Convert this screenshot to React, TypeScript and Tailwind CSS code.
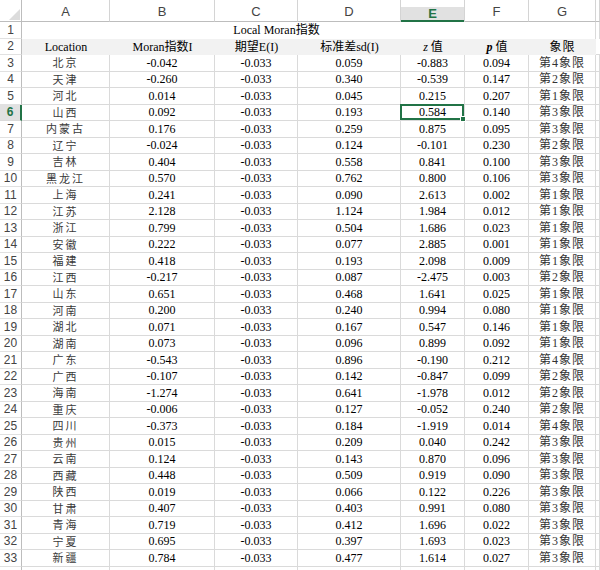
import React from "react";

const rows: [string, string, string, string, string, string, string][] = [
  ["北京", "-0.042", "-0.033", "0.059", "-0.883", "0.094", "第4象限"],
  ["天津", "-0.260", "-0.033", "0.340", "-0.539", "0.147", "第2象限"],
  ["河北", "0.014", "-0.033", "0.045", "0.215", "0.207", "第1象限"],
  ["山西", "0.092", "-0.033", "0.193", "0.584", "0.140", "第3象限"],
  ["内蒙古", "0.176", "-0.033", "0.259", "0.875", "0.095", "第3象限"],
  ["辽宁", "-0.024", "-0.033", "0.124", "-0.101", "0.230", "第2象限"],
  ["吉林", "0.404", "-0.033", "0.558", "0.841", "0.100", "第3象限"],
  ["黑龙江", "0.570", "-0.033", "0.762", "0.800", "0.106", "第3象限"],
  ["上海", "0.241", "-0.033", "0.090", "2.613", "0.002", "第1象限"],
  ["江苏", "2.128", "-0.033", "1.124", "1.984", "0.012", "第1象限"],
  ["浙江", "0.799", "-0.033", "0.504", "1.686", "0.023", "第1象限"],
  ["安徽", "0.222", "-0.033", "0.077", "2.885", "0.001", "第1象限"],
  ["福建", "0.418", "-0.033", "0.193", "2.098", "0.009", "第1象限"],
  ["江西", "-0.217", "-0.033", "0.087", "-2.475", "0.003", "第2象限"],
  ["山东", "0.651", "-0.033", "0.468", "1.641", "0.025", "第1象限"],
  ["河南", "0.200", "-0.033", "0.240", "0.994", "0.080", "第1象限"],
  ["湖北", "0.071", "-0.033", "0.167", "0.547", "0.146", "第1象限"],
  ["湖南", "0.073", "-0.033", "0.096", "0.899", "0.092", "第1象限"],
  ["广东", "-0.543", "-0.033", "0.896", "-0.190", "0.212", "第4象限"],
  ["广西", "-0.107", "-0.033", "0.142", "-0.847", "0.099", "第2象限"],
  ["海南", "-1.274", "-0.033", "0.641", "-1.978", "0.012", "第2象限"],
  ["重庆", "-0.006", "-0.033", "0.127", "-0.052", "0.240", "第2象限"],
  ["四川", "-0.373", "-0.033", "0.184", "-1.919", "0.014", "第4象限"],
  ["贵州", "0.015", "-0.033", "0.209", "0.040", "0.242", "第3象限"],
  ["云南", "0.124", "-0.033", "0.143", "0.870", "0.096", "第3象限"],
  ["西藏", "0.448", "-0.033", "0.509", "0.919", "0.090", "第3象限"],
  ["陕西", "0.019", "-0.033", "0.066", "0.122", "0.226", "第3象限"],
  ["甘肃", "0.407", "-0.033", "0.403", "0.991", "0.080", "第3象限"],
  ["青海", "0.719", "-0.033", "0.412", "1.696", "0.022", "第3象限"],
  ["宁夏", "0.695", "-0.033", "0.397", "1.693", "0.023", "第3象限"],
  ["新疆", "0.784", "-0.033", "0.477", "1.614", "0.027", "第3象限"],
];

const GRID =
  "grid grid-cols-[22px_88px_105px_83px_103px_64px_64px_67px_1fr]";
const CELL =
  "flex items-center justify-center border-r border-b border-[#dadada] whitespace-nowrap overflow-hidden";
const ROWH = "h-[16.5px]";
const HDR_FONT = "font-['Liberation_Sans',sans-serif] text-[12px] text-[#444444]";

function RowHead({ n, selected }: { n?: number; selected?: boolean }) {
  return selected ? (
    <div className="flex items-center justify-center bg-[#e1e1e1] border-b border-[#dadada] border-r-2 border-r-[#217346] font-['Liberation_Sans',sans-serif] text-[12px] font-bold text-[#217346]">
      {n}
    </div>
  ) : (
    <div
      className={`flex items-center justify-center bg-white border-b border-[#e1e1e1] border-r border-r-[#bdbdbd] ${HDR_FONT}`}
    >
      {n}
    </div>
  );
}

export default function App() {
  const cols = ["A", "B", "C", "D", "E", "F", "G", ""];
  return (
    <div className="w-[600px] h-[570px] overflow-hidden bg-white font-['Liberation_Serif','Noto_Sans_CJK_SC',serif] text-[12px] text-black leading-none">
      {/* column header */}
      <div className={`${GRID} h-[22px]`}>
        <div className="relative border-r border-b border-[#bdbdbd] bg-white">
          <svg
            className="absolute left-[9px] top-[9px]"
            width="11"
            height="11"
            viewBox="0 0 11 11"
          >
            <polygon points="11,0 11,11 0,11" fill="#dcdcdc" />
          </svg>
        </div>
        {cols.map((c, i) =>
          c === "E" ? (
            <div
              key={i}
              className="flex flex-col justify-end border-r border-[#d4d4d4] bg-white"
            >
              <div className="h-[15px] flex items-center justify-center bg-[#e1e1e1] border-b-2 border-[#217346] font-['Liberation_Sans',sans-serif] text-[13px] font-bold text-[#217346]">
                E
              </div>
            </div>
          ) : (
            <div
              key={i}
              className={`flex items-end justify-center pb-[3px] border-r border-b border-r-[#d4d4d4] border-b-[#bdbdbd] bg-white ${HDR_FONT} text-[13px]`}
            >
              {c}
            </div>
          )
        )}
      </div>

      {/* row 1: merged title */}
      <div className={`${GRID} ${ROWH}`}>
        <RowHead n={1} />
        <div className="col-span-6 flex items-center justify-center pl-[2px]">
          Local Moran指数
        </div>
        <div className="border-r border-[#dadada]" />
        <div className="border-r border-[#dadada]" />
      </div>

      {/* row 2: headers */}
      <div className={`${GRID} ${ROWH}`}>
        <RowHead n={2} />
        <div className="flex items-center justify-center bg-[#f2f2f2]">Location</div>
        <div className="flex items-center justify-center bg-[#f2f2f2]">Moran指数I</div>
        <div className="flex items-center justify-center bg-[#f2f2f2]">期望E(I)</div>
        <div className="flex items-center justify-center bg-[#f2f2f2]">标准差sd(I)</div>
        <div className="flex items-center justify-center bg-[#f2f2f2] whitespace-pre">
          <span className="italic">z</span> 值
        </div>
        <div className="flex items-center justify-center bg-[#f2f2f2] whitespace-pre">
          <span className="italic font-bold">p</span> 值
        </div>
        <div className="flex items-center justify-center bg-[#f2f2f2] tracking-[1px]">象限</div>
        <div className="border-b border-[#dadada]" />
      </div>

      {rows.map((r, i) => {
        const n = i + 3;
        const sel = n === 6;
        return (
          <div key={n} className={`${GRID} ${ROWH}`}>
            <RowHead n={n} selected={sel} />
            <div className={`${CELL} font-['Noto_Sans_CJK_SC',sans-serif] text-[11px] tracking-[2px] text-[#3a3a3a]`}>
              {r[0]}
            </div>
            <div className={CELL}>{r[1]}</div>
            <div className={CELL}>{r[2]}</div>
            <div className={CELL}>{r[3]}</div>
            <div className={`${CELL} ${sel ? "relative overflow-visible" : ""}`}>
              {r[4]}
              {sel && (
                <div className="absolute -left-[1px] -top-[1px] right-0 bottom-0 border-2 border-[#217346]">
                  <div className="absolute -right-[4px] -bottom-[4px] w-[6px] h-[6px] bg-[#217346] border border-white" />
                </div>
              )}
            </div>
            <div className={CELL}>{r[5]}</div>
            <div className={`${CELL} text-[#333] tracking-[1px]`}>{r[6]}</div>
            <div className={CELL} />
          </div>
        );
      })}
      <div className={`${GRID} ${ROWH}`}>
        <RowHead />
        <div className={CELL} />
        <div className={CELL} />
        <div className={CELL} />
        <div className={CELL} />
        <div className={CELL} />
        <div className={CELL} />
        <div className={CELL} />
        <div className={CELL} />
      </div>
    </div>
  );
}
